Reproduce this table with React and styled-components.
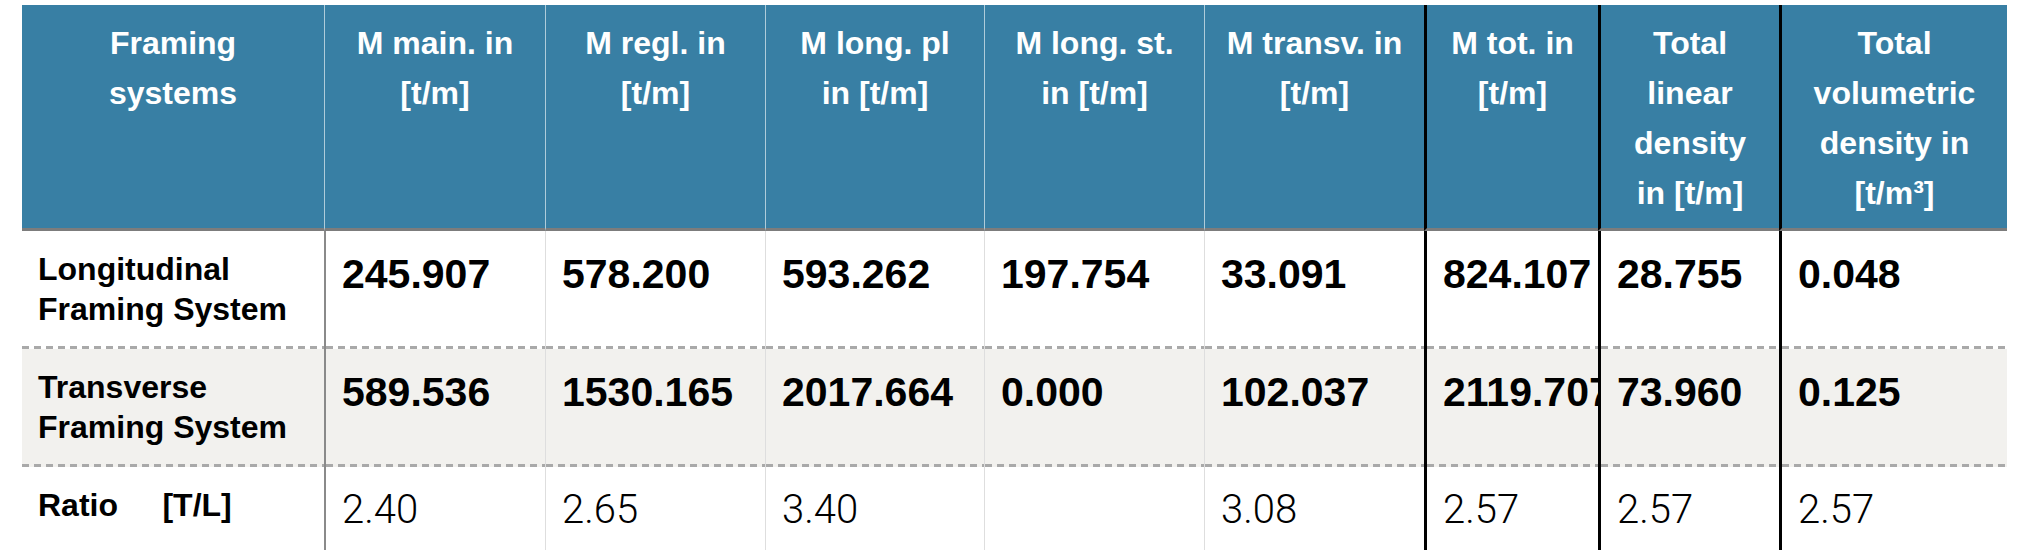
import React from "react";
import styled, { createGlobalStyle, css } from "styled-components";

const GlobalStyle = createGlobalStyle`
  html, body {
    margin: 0;
    padding: 0;
    background: #ffffff;
    overflow: hidden;
  }
`;

const HEAD_BLUE = "#387fa4";

const edges = {
  head: {
    none: "none",
    thin: "1px solid rgba(255, 255, 255, 0.6)",
    gray: "1px solid rgba(255, 255, 255, 0.6)",
    black: "3px solid #000000",
  },
  body: {
    none: "none",
    thin: "1px solid #dedede",
    gray: "2px solid #8a8a8a",
    black: "3px solid #000000",
  },
};

const Sheet = styled.div`
  display: grid;
  grid-template-columns: 302px 221px 220px 219px 220px 220px 174px 181px 228px;
  width: max-content;
  margin: 5px 0 0 22px;
  font-family: "Liberation Sans", Arial, sans-serif;
`;

const HeadCell = styled.div`
  box-sizing: border-box;
  height: 226px;
  padding: 13px 4px 0;
  background: ${HEAD_BLUE};
  color: #ffffff;
  font-size: 32px;
  font-weight: 700;
  line-height: 50px;
  text-align: center;
  white-space: nowrap;
  border-left: ${({ $edge }) => edges.head[$edge]};
  border-bottom: 3px solid #7c7c7c;
`;

const HeadLine = styled.span`
  display: block;
`;

const dashedBottom = css`
  background-image: repeating-linear-gradient(
    90deg,
    #a9a9a9 0 7px,
    transparent 7px 12px
  );
  background-size: 100% 3px;
  background-position: left bottom;
  background-repeat: no-repeat;
`;

const Cell = styled.div`
  box-sizing: border-box;
  height: ${({ $last }) => ($last ? "83px" : "118px")};
  padding: 18px 16px 0;
  overflow: hidden;
  color: #000000;
  background-color: ${({ $shade }) => ($shade ? "#f2f1ee" : "#ffffff")};
  border-left: ${({ $edge }) => edges.body[$edge]};
  ${({ $last }) => !$last && dashedBottom}
`;

const Label = styled.div`
  font-size: 32px;
  font-weight: 700;
  line-height: 40px;
  white-space: pre-wrap;
`;

const Value = styled.div`
  white-space: nowrap;
  ${({ $light }) =>
    $light
      ? css`
          font-family: Roboto, "Liberation Sans", sans-serif;
          font-weight: 300;
          font-size: 40px;
          line-height: 50px;
        `
      : css`
          font-weight: 700;
          font-size: 41px;
          line-height: 50px;
        `}
`;

const columnEdges = ["none", "gray", "thin", "thin", "thin", "thin", "black", "black", "black"];

const headers = [
  ["Framing", "systems"],
  ["M main. in", "[t/m]"],
  ["M regl. in", "[t/m]"],
  ["M long. pl", "in [t/m]"],
  ["M long. st.", "in [t/m]"],
  ["M transv. in", "[t/m]"],
  ["M tot. in", "[t/m]"],
  ["Total", "linear", "density", "in [t/m]"],
  ["Total", "volumetric", "density in", "[t/m³]"],
];

const rows = [
  {
    label: "Longitudinal Framing System",
    values: ["245.907", "578.200", "593.262", "197.754", "33.091", "824.107", "28.755", "0.048"],
  },
  {
    label: "Transverse Framing System",
    values: ["589.536", "1530.165", "2017.664", "0.000", "102.037", "2119.707", "73.960", "0.125"],
    shade: true,
  },
  {
    label: "Ratio     [T/L]",
    values: ["2.40", "2.65", "3.40", "", "3.08", "2.57", "2.57", "2.57"],
    light: true,
    last: true,
  },
];

const App = () => {
  return (
    <>
      <GlobalStyle />
      <Sheet>
        {headers.map((lines, i) => (
          <HeadCell key={`h${i}`} $edge={columnEdges[i]}>
            {lines.map((line) => (
              <HeadLine key={line}>{line}</HeadLine>
            ))}
          </HeadCell>
        ))}
        {rows.map((row, r) => (
          <React.Fragment key={`r${r}`}>
            <Cell $edge="none" $shade={row.shade} $last={row.last}>
              <Label>{row.label}</Label>
            </Cell>
            {row.values.map((value, c) => (
              <Cell
                key={`r${r}c${c}`}
                $edge={columnEdges[c + 1]}
                $shade={row.shade}
                $last={row.last}
              >
                <Value $light={row.light}>{value}</Value>
              </Cell>
            ))}
          </React.Fragment>
        ))}
      </Sheet>
    </>
  );
};

export default App;
